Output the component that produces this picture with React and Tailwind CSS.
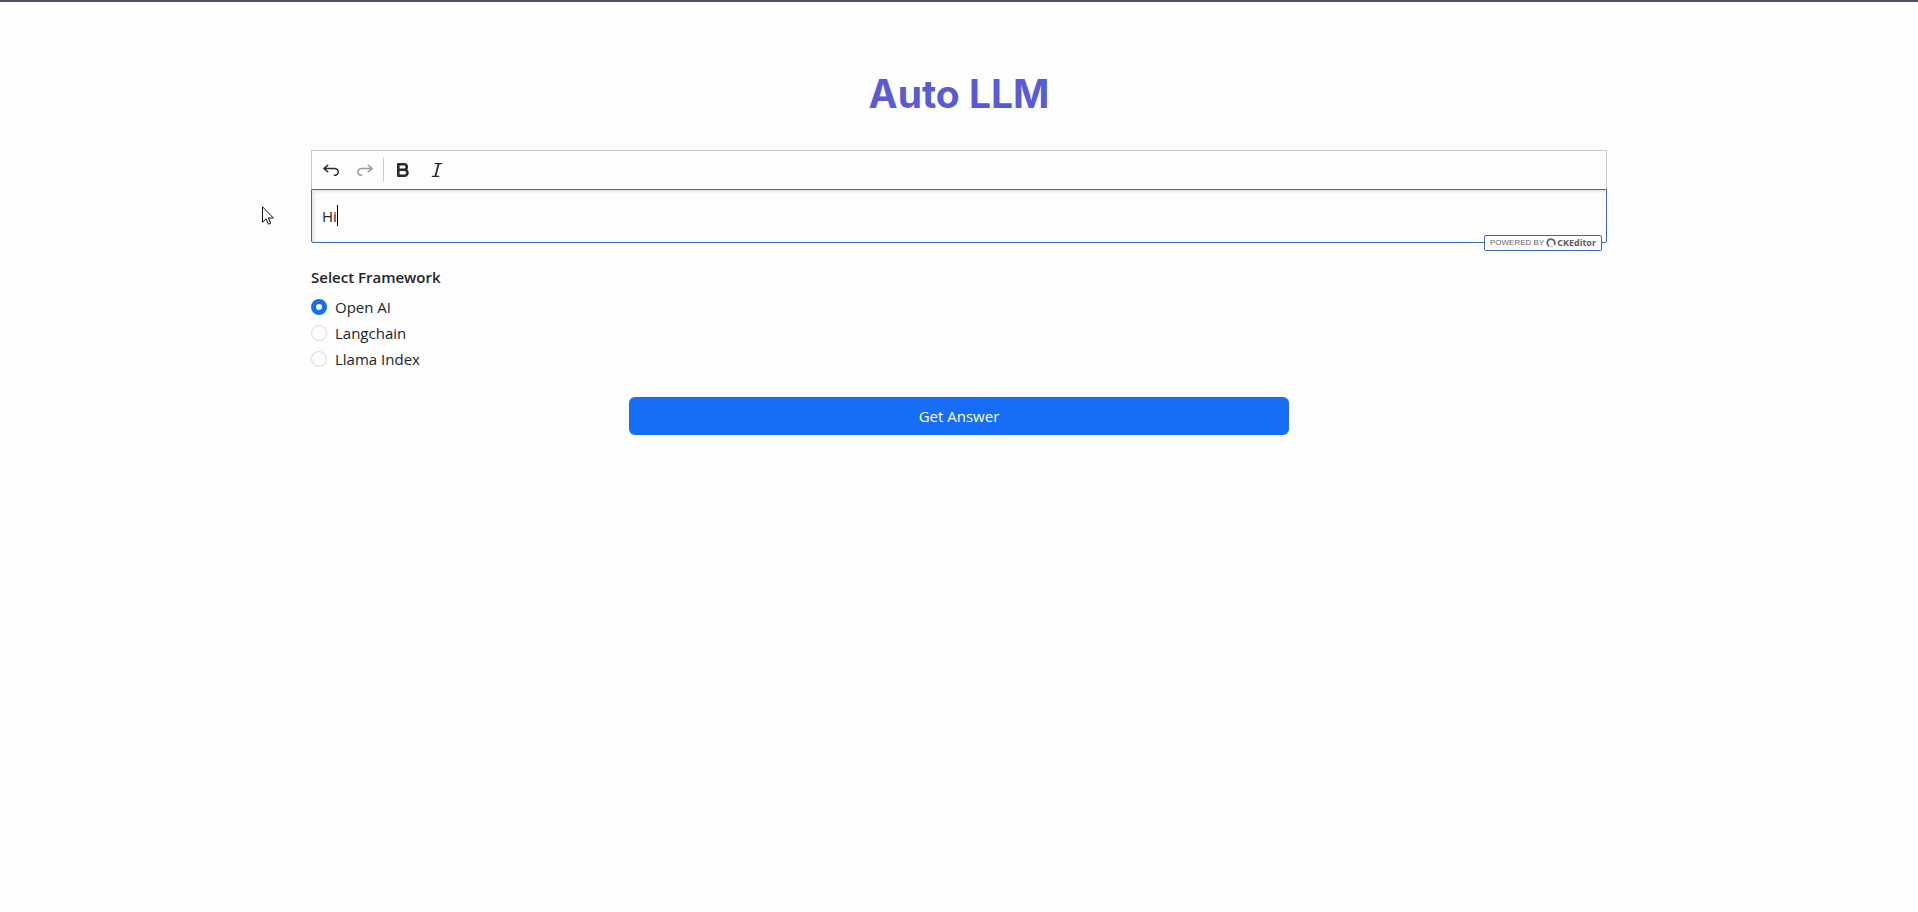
import React, { useState } from 'react';

const frameworks = [
  { id: 'openai', label: 'Open AI' },
  { id: 'langchain', label: 'Langchain' },
  { id: 'llama', label: 'Llama Index' },
];

const UndoIcon = () => (
  <svg viewBox="0 0 20 20" className="w-5 h-5" fill="currentColor" aria-hidden="true">
    <path d="m5.042 9.367 2.189 1.837a.75.75 0 0 1-.965 1.149l-3.788-3.18a.747.747 0 0 1-.21-.284.75.75 0 0 1 .17-.945L6.23 4.762a.75.75 0 1 1 .964 1.15L4.863 7.866h8.917A.75.75 0 0 1 14 7.9a4 4 0 1 1-1.477 7.718l.344-1.489a2.5 2.5 0 1 0 1.094-4.73l.008-.032H5.042z" />
  </svg>
);

const RedoIcon = () => (
  <svg viewBox="0 0 20 20" className="w-5 h-5" fill="currentColor" aria-hidden="true">
    <path d="m14.958 9.367-2.189 1.837a.75.75 0 0 0 .965 1.149l3.788-3.18a.747.747 0 0 0 .21-.284.75.75 0 0 0-.17-.945L13.77 4.762a.75.75 0 1 0-.964 1.15l2.331 1.955H6.22A.75.75 0 0 0 6 7.9a4 4 0 1 0 1.477 7.718l-.344-1.489A2.5 2.5 0 1 1 6.039 9.4l-.008-.032h8.927z" />
  </svg>
);

const BoldIcon = () => (
  <svg viewBox="0 0 20 20" className="w-5 h-5" fill="none" stroke="currentColor" strokeWidth="2.6" strokeLinejoin="round" aria-hidden="true">
    <path d="M5.3 4.3h5.7a2.7 2.7 0 0 1 0 5.5H5.3zM5.3 9.8h6.2a2.95 2.95 0 0 1 0 5.9H5.3z" />
  </svg>
);

const ItalicIcon = () => (
  <svg viewBox="0 0 20 20" className="w-5 h-5" fill="none" stroke="currentColor" strokeLinecap="round" aria-hidden="true">
    <path d="M8.2 3.7h6.4M5.3 16.4h6.4" strokeWidth="1.2" />
    <path d="M11.6 4 8.5 16" strokeWidth="1.8" />
  </svg>
);

const ToolButton = ({ label, disabled, children }) => (
  <button
    type="button"
    aria-label={label}
    disabled={disabled}
    className="w-[30px] h-[30px] flex items-center justify-center rounded-sm text-[#2b2b2b] hover:bg-gray-100 disabled:text-[#999]"
  >
    {children}
  </button>
);

const Editor = () => {
  const [text, setText] = useState('Hi');

  return (
    <div>
      <div className="flex items-center px-1 h-[39px] border border-b-0 border-[#c8c8d2]">
        <div className="flex gap-1">
          <ToolButton label="Undo"><UndoIcon /></ToolButton>
          <ToolButton label="Redo" disabled><RedoIcon /></ToolButton>
        </div>
        <div className="w-px h-6 ml-[3px] mr-1 bg-[#ccccd6]" />
        <div className="flex gap-1">
          <ToolButton label="Bold"><BoldIcon /></ToolButton>
          <ToolButton label="Italic"><ItalicIcon /></ToolButton>
        </div>
      </div>
      <div className="relative">
        <textarea
          aria-label="Question"
          rows={1}
          value={text}
          onChange={(e) => setText(e.target.value)}
          className="block w-full h-[54px] px-[10px] py-[14px] leading-6 resize-none outline-none caret-transparent border border-[#3c68b8] rounded-b-xs shadow-[inset_2px_2px_3px_rgba(0,0,0,0.1)]"
        />
        <span className="absolute left-[26px] top-4 w-px h-[21px] bg-black" />
        <a
          href="#ckeditor"
          className="absolute right-[5px] -bottom-2 h-4 px-[5px] flex items-center bg-[#fdfdfd] border border-[#3c68b8] rounded-xs whitespace-nowrap"
        >
          <span className="font-['Liberation_Sans',sans-serif] text-[8px] text-[#666]">POWERED BY</span>
          <svg viewBox="0 0 10 10" className="w-[10px] h-[10px] ml-[2px] mr-px" fill="none" aria-hidden="true">
            <path d="M3.2 8.2A3.8 3.8 0 0 1 4.2 1.2L6.3 1.3A3.8 3.8 0 0 1 8.3 6.9" stroke="#66667a" strokeWidth="1.8" />
            <path d="M4.4 8.6h2.4" stroke="#b4b4bc" strokeWidth="1.2" />
          </svg>
          <span className="text-[9px] font-bold text-[#5c5c62]">CKEditor</span>
        </a>
      </div>
    </div>
  );
};

const App = () => {
  const [framework, setFramework] = useState('openai');

  return (
    <div className="min-h-screen bg-[#fdfdfd] border-t-2 border-[#4b5068] font-['Open_Sans',sans-serif] text-[15px] text-[#212529]">
      <main className="relative max-w-[1320px] mx-auto px-3 pt-[68px]">
        <h1 className="mb-8 text-center font-['Inter',sans-serif] text-[39px] leading-12 font-bold text-[#5a5bd0]">Auto LLM</h1>

        <Editor />

        <fieldset className="mt-[22px]">
          <legend className="mb-[6px] leading-6 font-semibold">Select Framework</legend>
          {frameworks.map((f) => (
            <div key={f.id} className="flex items-center gap-2 mb-[2px] leading-6">
              <input
                type="radio"
                id={f.id}
                name="framework"
                checked={framework === f.id}
                onChange={() => setFramework(f.id)}
                className="appearance-none w-4 h-4 rounded-full border border-[#d9dbe2] checked:border-5 checked:border-[#156ef5]"
              />
              <label htmlFor={f.id}>{f.label}</label>
            </div>
          ))}
        </fieldset>

        <button
          type="button"
          className="block w-[51%] mx-auto mt-6 h-[38px] rounded-md bg-[#156ef5] hover:bg-[#0b5ed7] text-white"
        >
          Get Answer
        </button>

        {/* mouse pointer */}
        <svg viewBox="0 0 12 19" className="absolute -left-[37px] top-[204px] w-3 h-[19px]" aria-hidden="true">
          <path d="M.5.8v15.4l3.6-3.4 2.3 5.4 2.3-1-2.3-5.2h5z" fill="#fff" stroke="#111" />
        </svg>
      </main>
    </div>
  );
};

export default App;
